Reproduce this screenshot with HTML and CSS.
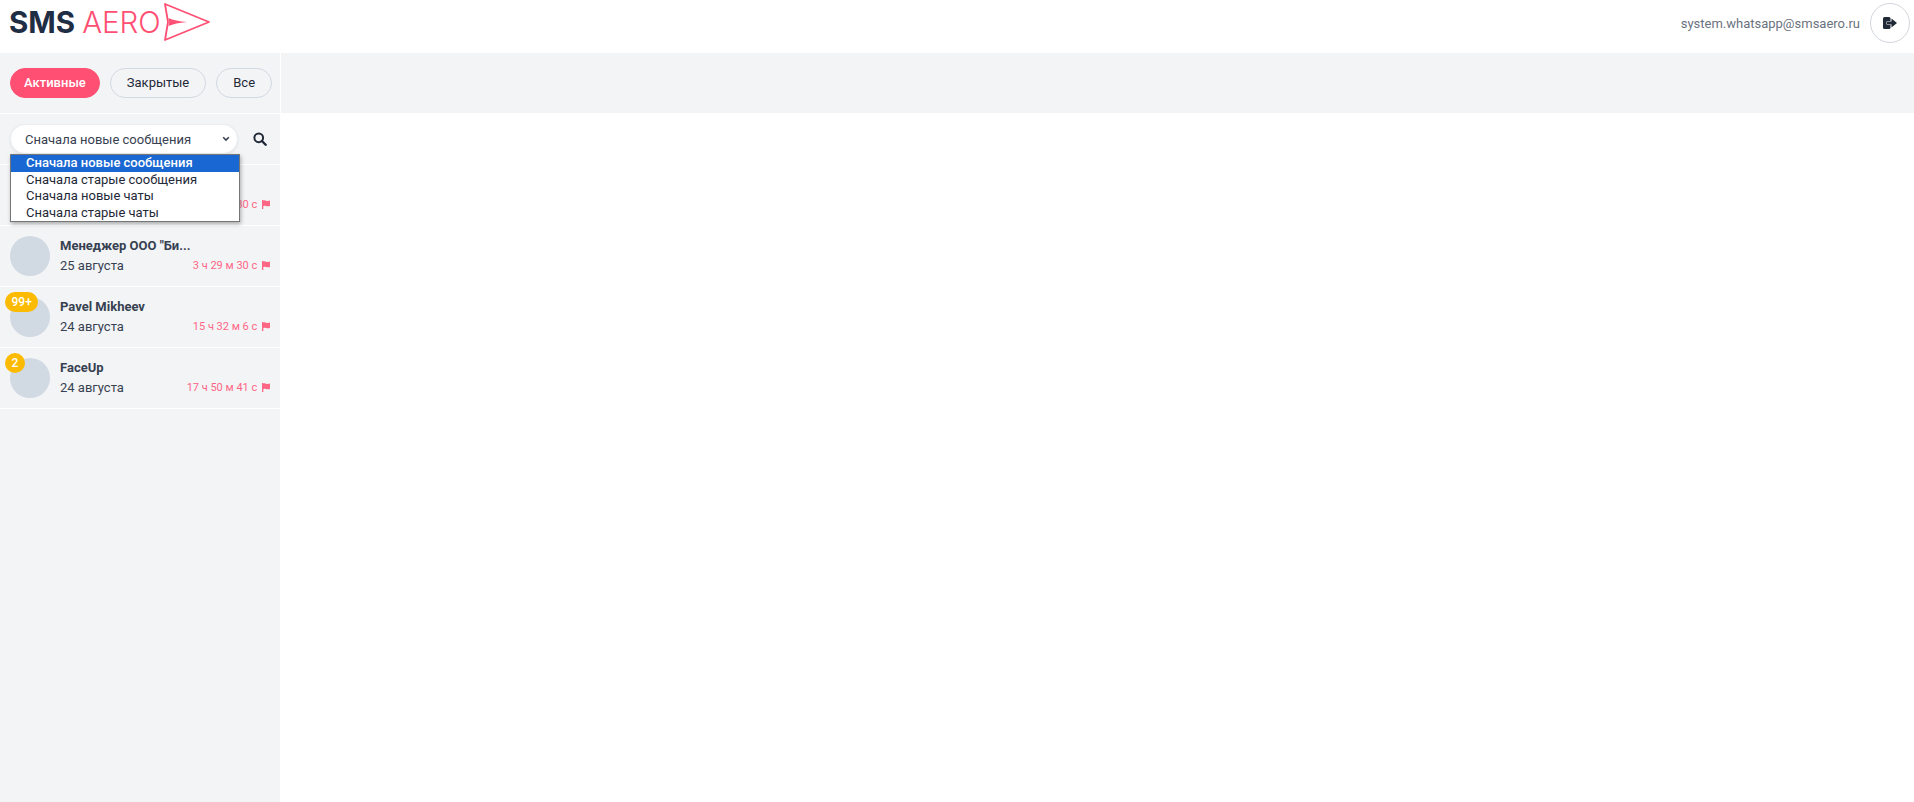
FILE: index.html
```html
<!DOCTYPE html>
<html lang="ru">
<head>
    <meta charset="UTF-8">
    <title>SMS Aero</title>
    <link rel="stylesheet" href="styles.css">
</head>
<body>
    <header class="topbar">
        <a href="#" class="logo">
            <span class="logo-sms">SMS</span>
            <span class="logo-aero">AERO</span>
            <svg class="logo-plane" width="46" height="38" viewBox="0 0 46 38">
                <path d="M1 1 L45 19 L1 37 L4 19 Z" fill="none" stroke="#ff4f73" stroke-width="1.8" stroke-linejoin="round"/>
                <path d="M4.5 15 Q11 18 23 19 Q11 20 4.5 23 Q6 19 4.5 15 Z" fill="#ff4f73"/>
            </svg>
        </a>
        <div class="user">
            <span class="user-mail">system.whatsapp@smsaero.ru</span>
            <button class="logout">
                <svg width="14" height="12" viewBox="0 0 14 12">
                    <path d="M1.5 0 H6 Q7.5 0 7.5 1.5 V10.5 Q7.5 12 6 12 H1.5 Q0 12 0 10.5 V1.5 Q0 0 1.5 0 Z" fill="#1f2937"/>
                    <path d="M4 4.5 H8.5 V1.5 L14 6 L8.5 10.5 V7.5 H4 Z" fill="#1f2937" stroke="#fff" stroke-width="1" paint-order="stroke"/>
                </svg>
            </button>
        </div>
    </header>

    <div class="layout">
        <aside class="sidebar">
            <div class="tabs">
                <button class="tab active">Активные</button>
                <button class="tab">Закрытые</button>
                <button class="tab">Все</button>
            </div>

            <div class="sort">
                <div class="sort-select">
                    <span>Сначала новые сообщения</span>
                    <svg width="8" height="6" viewBox="0 0 8 6">
                        <path d="M1.2 1.2 L4 4 L6.8 1.2" fill="none" stroke="#374151" stroke-width="1.6"/>
                    </svg>
                </div>
                <svg class="search-icon" width="14" height="14" viewBox="0 0 14 14">
                    <circle cx="5.8" cy="5.8" r="4.4" fill="none" stroke="#1f2937" stroke-width="2"/>
                    <path d="M9 9 L12.8 12.8" stroke="#1f2937" stroke-width="2.4" stroke-linecap="round"/>
                </svg>
                <ul class="sort-menu">
                    <li class="selected">Сначала новые сообщения</li>
                    <li>Сначала старые сообщения</li>
                    <li>Сначала новые чаты</li>
                    <li>Сначала старые чаты</li>
                </ul>
            </div>

            <ul class="chats">
                <li class="chat">
                    <div class="avatar"></div>
                    <div class="chat-body">
                        <div class="chat-name"></div>
                        <div class="chat-meta">
                            <span class="chat-time">30 с <svg class="flag" width="8" height="9" viewBox="0 0 9 10"><path d="M0 0 H1.5 V0.6 Q3.2 0 4.6 0.7 Q6.4 1.5 9 0.6 V6.6 Q6.4 7.5 4.6 6.7 Q3.2 6 1.5 6.6 V10 H0 Z" fill="#ff6685"/></svg></span>
                        </div>
                    </div>
                </li>
                <li class="chat">
                    <div class="avatar"></div>
                    <div class="chat-body">
                        <div class="chat-name">Менеджер ООО "Би...</div>
                        <div class="chat-meta">
                            <span>25 августа</span>
                            <span class="chat-time">3 ч 29 м 30 с <svg class="flag" width="8" height="9" viewBox="0 0 9 10"><path d="M0 0 H1.5 V0.6 Q3.2 0 4.6 0.7 Q6.4 1.5 9 0.6 V6.6 Q6.4 7.5 4.6 6.7 Q3.2 6 1.5 6.6 V10 H0 Z" fill="#ff6685"/></svg></span>
                        </div>
                    </div>
                </li>
                <li class="chat">
                    <span class="badge">99+</span>
                    <div class="avatar"></div>
                    <div class="chat-body">
                        <div class="chat-name">Pavel Mikheev</div>
                        <div class="chat-meta">
                            <span>24 августа</span>
                            <span class="chat-time">15 ч 32 м 6 с <svg class="flag" width="8" height="9" viewBox="0 0 9 10"><path d="M0 0 H1.5 V0.6 Q3.2 0 4.6 0.7 Q6.4 1.5 9 0.6 V6.6 Q6.4 7.5 4.6 6.7 Q3.2 6 1.5 6.6 V10 H0 Z" fill="#ff6685"/></svg></span>
                        </div>
                    </div>
                </li>
                <li class="chat">
                    <span class="badge">2</span>
                    <div class="avatar"></div>
                    <div class="chat-body">
                        <div class="chat-name">FaceUp</div>
                        <div class="chat-meta">
                            <span>24 августа</span>
                            <span class="chat-time">17 ч 50 м 41 с <svg class="flag" width="8" height="9" viewBox="0 0 9 10"><path d="M0 0 H1.5 V0.6 Q3.2 0 4.6 0.7 Q6.4 1.5 9 0.6 V6.6 Q6.4 7.5 4.6 6.7 Q3.2 6 1.5 6.6 V10 H0 Z" fill="#ff6685"/></svg></span>
                        </div>
                    </div>
                </li>
            </ul>
        </aside>

        <main class="content">
            <div class="content-head"></div>
        </main>
    </div>
</body>
</html>
```

FILE: styles.css
```css
* {
    margin: 0;
    padding: 0;
    box-sizing: border-box;
}

body {
    font-family: Roboto, "Liberation Sans", sans-serif;
    font-size: 13px;
    color: #1f2937;
    background-color: #fff;
    height: 100vh;
    overflow: hidden;
    display: flex;
    flex-direction: column;
}

ul {
    list-style: none;
}

.topbar {
    height: 53px;
    flex: none;
    display: flex;
    justify-content: space-between;
    align-items: center;
    padding: 0 4px 7px 9px;
}

.logo {
    display: flex;
    align-items: center;
    text-decoration: none;
    font-family: Inter, sans-serif;
    font-size: 29.5px;
    margin-bottom: 2px;
}

.logo-sms {
    font-weight: 700;
    color: #1f2e44;
    margin-right: 7px;
}

.logo-aero {
    font-weight: 300;
    color: #ff4f73;
    margin-right: 3px;
}

.user {
    display: flex;
    align-items: center;
    gap: 10px;
}

.user-mail {
    color: #6b7280;
    font-size: 13px;
}

.logout {
    width: 40px;
    height: 40px;
    border: 1px solid #d1d5db;
    border-radius: 50%;
    background-color: #fff;
    display: flex;
    align-items: center;
    justify-content: center;
}

.layout {
    flex: 1;
    display: flex;
    min-height: 0;
}

.sidebar {
    width: 280px;
    flex: none;
    background-color: #f3f4f6;
}

.tabs {
    height: 61px;
    display: flex;
    align-items: center;
    gap: 10px;
    padding: 0 10px 1px;
    border-bottom: 1px solid #fff;
}

.tab {
    height: 30px;
    padding: 0 16px;
    border: 1px solid #d1d9e2;
    border-radius: 15px;
    background: none;
    font: inherit;
    color: #1f2937;
}

.tab.active {
    padding: 0 13px;
    background-color: #ff4f73;
    border-color: #ff4f73;
    color: #fff;
    font-weight: 500;
}

.sort {
    position: relative;
    height: 51px;
    display: flex;
    align-items: center;
    gap: 15px;
    padding: 0 13px 0 10px;
    border-bottom: 1px solid #fff;
}

.sort-select {
    width: 230px;
    height: 30px;
    padding: 0 7px 0 14px;
    display: flex;
    align-items: center;
    justify-content: space-between;
    background-color: #fff;
    border: 1px solid #eceef1;
    border-radius: 15px;
    box-shadow: 0 1px 3px rgba(0, 0, 0, 0.08);
    color: #374151;
}

.sort-menu {
    position: absolute;
    top: 40px;
    left: 10px;
    width: 230px;
    z-index: 1;
    background-color: #fff;
    border: 1px solid #767676;
    box-shadow: 1px 2px 4px rgba(0, 0, 0, 0.3);
    line-height: 16.6px;
    color: #1f2937;
}

.sort-menu li {
    padding: 0 15px;
}

.sort-menu .selected {
    background-color: #1967d2;
    color: #fff;
    font-weight: 500;
}

.chat {
    position: relative;
    height: 61px;
    display: flex;
    align-items: center;
    gap: 10px;
    padding: 0 10px;
    border-bottom: 1px solid #fff;
}

.avatar {
    width: 40px;
    height: 40px;
    flex: none;
    border-radius: 50%;
    background-color: #d1d9e2;
}

.chat-body {
    flex: 1;
    min-width: 0;
}

.chat-name {
    font-weight: 700;
    color: #374151;
    line-height: 20px;
    min-height: 20px;
}

.chat-meta {
    display: flex;
    justify-content: space-between;
    align-items: center;
    line-height: 20px;
    color: #374151;
}

.chat-time {
    font-size: 11px;
    color: #ff6685;
    margin-left: auto;
}

.flag {
    margin-left: 2px;
    vertical-align: -1px;
}

.badge {
    position: absolute;
    top: 5px;
    left: 5px;
    min-width: 20px;
    height: 20px;
    padding: 0 6.5px;
    border-radius: 10px;
    background-color: #fcbb00;
    color: #fff;
    font-size: 12px;
    font-weight: 500;
    line-height: 20px;
    text-align: center;
}

.content {
    flex: 1;
}

.content-head {
    height: 60px;
    background-color: #f3f4f6;
    border-left: 1px solid #fff;
}
```
